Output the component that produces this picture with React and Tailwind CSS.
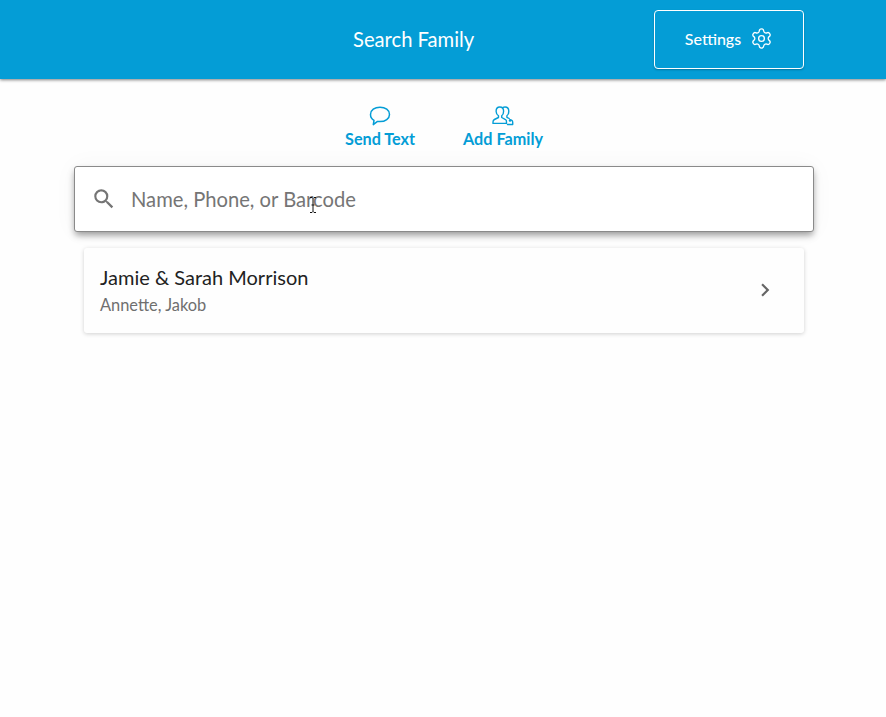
import React from "react";
import { Settings } from "lucide-react";
import { MdSearch, MdChevronRight } from "react-icons/md";

const font = "font-['Lato','Noto_Sans',sans-serif]";

const ChatIcon = () => (
  <svg width="22" height="20" viewBox="0 0 22 20" fill="none" stroke="currentColor" strokeWidth="1.5" strokeLinejoin="round">
    <path d="M11 1.200c5.300 0 9.500 3 9.500 7.200s-4.200 7.200-9.500 7.200c-.9 0-1.700-.1-2.500-.2L4.300 18.600l.7-4.200C2.800 13.100 1.500 11 1.500 8.400 1.500 4.200 5.700 1.200 11 1.200z" />
  </svg>
);

const FamilyIcon = () => (
  <svg width="22" height="20" viewBox="0 0 22 20" fill="none" stroke="currentColor" strokeWidth="1.4" strokeLinejoin="round" strokeLinecap="round">
    <path d="M7.800 1c2.500 0 3.800 1.800 3.800 4.200 0 2-.8 3.800-1.900 4.600v1.700l3.400 1.800c.6.300 1 .6 1.200 1.100.2.500.2 1.200.2 3H1v-1.400c0-1.200.4-2 1.400-2.500l4.100-2V9.800C5.400 9 4.100 7.200 4.100 5.200 4.100 2.800 5.300 1 7.800 1z" />
    <path d="M11 1.400C11.600 1.100 12.300 1 13 1c2.500 0 3.800 1.800 3.800 4.200 0 2-.8 3.800-1.900 4.600v1.500l2.300 1.200" />
    <path d="M15.500 18.500h5.200c.3-3.200-.4-4.800-2.600-4.800" />
    <circle cx="18" cy="14.500" r="0.600" />
  </svg>
);

const App = () => {
  return (
    <div className={`relative min-h-[717px] bg-[#fefefe] ${font}`}>
      <header className="flex h-[79px] items-center bg-[#049dd6] pl-[353px] pr-[82px] shadow-[0_1px_3px_rgba(0,0,0,0.5)]">
        <h1 className="text-[20.2px] font-normal text-white">Search Family</h1>
        <button className="ml-auto flex h-[59px] w-[150px] items-center justify-center gap-[9px] rounded-[4px] border border-white pb-[2px] text-[16px] font-medium text-white shadow-[0_1px_2px_rgba(0,0,0,0.25)]">
          Settings
          <Settings size={23} strokeWidth={1.4} />
        </button>
      </header>

      <nav className="flex justify-center gap-12 pt-[27px] pl-[2px] text-[#049dd6]">
        <a className="flex flex-col items-center text-[16.200px] leading-[20px] font-bold">
          <ChatIcon />
          <span className="mt-[3px]">Send Text</span>
        </a>
        <a className="flex flex-col items-center text-[16.200px] leading-[20px] font-bold">
          <FamilyIcon />
          <span className="mt-[3px]">Add Family</span>
        </a>
      </nav>

      <div className="ml-[74px] mr-[72px] mt-[17px] flex h-[66px] items-center rounded-[3px] border border-[#8a8a8a] bg-white pl-[16px] shadow-[0_4px_7px_-1px_rgba(0,0,0,0.4),0_0_24px_rgba(0,0,0,0.04)]">
        <MdSearch size={26} className="text-[#757575]" />
        <span className="ml-[14px] text-[20.200px] text-[#757575]">Name, Phone, or Barcode</span>
      </div>

      <div className="ml-[84px] mr-[82px] mt-[16px] flex h-[85px] items-center justify-between rounded-[3px] bg-[#fefefe] pl-4 pr-[26px] shadow-[0_1px_4px_rgba(0,0,0,0.18)]">
        <div className="-mt-[3px]">
          <div className="text-[20px] leading-[26px] text-[#222222]">Jamie &amp; Sarah Morrison</div>
          <div className="mt-[5px] text-[16.400px] leading-[20px] text-[#6f6f6f]">Annette, Jakob</div>
        </div>
        <MdChevronRight size={26} className="-mt-[2px] text-[#666666]" />
      </div>

      {/* mouse cursor over the search box */}
      <svg className="absolute left-[309px] top-[197px]" width="8" height="16" viewBox="0 0 8 16" fill="none" stroke="#111111" strokeWidth="1">
        <path d="M1 .5h2l1 1 1-1h2M4 1.500v13M1 15.500h2l1-1 1 1h2M2.500 8h3" />
      </svg>
    </div>
  );
};

export default App;
